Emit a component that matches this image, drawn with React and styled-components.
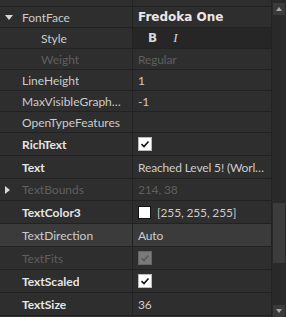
import styled, { createGlobalStyle } from "styled-components";

const GlobalStyle = createGlobalStyle`
    html, body {
        margin: 0;
        padding: 0;
        background: #2e2e2e;
    }
    body {
        font-family: "Lato", "Open Sans", sans-serif;
    }
`;

const rows = [
    { name: "FontFace", value: "Fredoka One", arrow: "down", kind: "font", h: 20 },
    { name: "Style", kind: "style", indent: true, h: 20 },
    { name: "Weight", value: "Regular", indent: true, disabled: true, h: 20 },
    { name: "LineHeight", value: "1", h: 20 },
    { name: "MaxVisibleGraphemes", value: "-1", h: 20 },
    { name: "OpenTypeFeatures", value: "", h: 20 },
    { name: "RichText", kind: "check", bold: true, h: 22 },
    { name: "Text", value: "Reached Level 5! (World 1 Complete)", bold: true, h: 22 },
    { name: "TextBounds", value: "214, 38", arrow: "right", disabled: true, h: 21 },
    { name: "TextColor3", kind: "color", value: "[255, 255, 255]", bold: true, h: 22 },
    { name: "TextDirection", value: "Auto", hover: true, h: 22 },
    { name: "TextFits", kind: "check", disabled: true, h: 22 },
    { name: "TextScaled", kind: "check", bold: true, h: 22 },
    { name: "TextSize", value: "36", bold: true, h: 22 },
];

function Check({ disabled }) {
    return (
        <CheckBox $disabled={disabled}>
            <svg width="10" height="10" viewBox="0 0 10 10">
                <path
                    d="M1.5 5.2 L4 7.5 L8.5 2.5"
                    fill="none"
                    stroke={disabled ? "#5a5a5a" : "#111"}
                    strokeWidth="1.6"
                />
            </svg>
        </CheckBox>
    );
}

function Value({ row }) {
    if (row.kind === "check") return <Check disabled={row.disabled} />;
    if (row.kind === "style")
        return (
            <StyleButtons>
                <span className="b">B</span>
                <span className="i">I</span>
            </StyleButtons>
        );
    if (row.kind === "color")
        return (
            <>
                <Swatch />
                <ValueText>{row.value}</ValueText>
            </>
        );
    return (
        <ValueText $disabled={row.disabled} $font={row.kind === "font"}>
            {row.value}
        </ValueText>
    );
}

export default function App() {
    return (
        <>
            <GlobalStyle />
            <Panel>
                <List>
                    <Row $h={6}>
                        <NameCell />
                        <ValueCell />
                    </Row>
                    {rows.map((row) => (
                        <Row key={row.name} $h={row.h} $hover={row.hover}>
                            <NameCell>
                                {row.arrow && <Arrow $dir={row.arrow} />}
                                <Label
                                    $indent={row.indent}
                                    $bold={row.bold}
                                    $disabled={row.disabled}
                                >
                                    {row.name}
                                </Label>
                            </NameCell>
                            <ValueCell $dark={row.kind === "style"}>
                                <Value row={row} />
                            </ValueCell>
                        </Row>
                    ))}
                </List>
                <ScrollBar>
                    <ScrollButton $up />
                    <Track>
                        <Thumb />
                    </Track>
                    <ScrollButton />
                </ScrollBar>
            </Panel>
        </>
    );
}

const Panel = styled.div`
    width: 286px;
    height: 317px;
    display: flex;
    overflow: hidden;
    background: #2e2e2e;
`;

const List = styled.div`
    width: 271px;
    display: flex;
    flex-direction: column;
    border-right: 1px solid #222;
`;

const Row = styled.div`
    display: grid;
    grid-template-columns: 133px 1fr;
    height: ${(p) => p.$h}px;
    flex-shrink: 0;
    border-bottom: 1px solid #222;
    background: ${(p) => (p.$hover ? "#3b3b3b" : "#2e2e2e")};
`;

const NameCell = styled.div`
    position: relative;
    display: flex;
    align-items: center;
    border-right: 1px solid #222;
    min-width: 0;
    overflow: hidden;
`;

const Label = styled.span`
    padding-left: ${(p) => (p.$indent ? 41 : 22)}px;
    font-size: 12px;
    font-weight: ${(p) => (p.$bold ? 700 : 400)};
    color: ${(p) => (p.$disabled ? "#5f5f5f" : p.$bold ? "#e6e6e6" : "#cccccc")};
    white-space: nowrap;
    overflow: hidden;
    text-overflow: ellipsis;
    max-width: 104px;
`;

const Arrow = styled.span`
    position: absolute;
    left: 5px;
    width: 0;
    height: 0;
    ${(p) =>
        p.$dir === "down"
            ? `border-left: 4px solid transparent;
               border-right: 4px solid transparent;
               border-top: 5px solid #d8d8d8;`
            : `border-top: 4px solid transparent;
               border-bottom: 4px solid transparent;
               border-left: 5px solid #d8d8d8;`}
`;

const ValueCell = styled.div`
    display: flex;
    align-items: center;
    gap: 6px;
    padding-left: 5px;
    min-width: 0;
    overflow: hidden;
    background: ${(p) => (p.$dark ? "#262626" : "transparent")};
`;

const ValueText = styled.span`
    font-size: 12px;
    font-family: ${(p) => (p.$font ? '"DejaVu Sans", sans-serif' : "inherit")};
    font-weight: ${(p) => (p.$font ? 700 : 400)};
    letter-spacing: ${(p) => (p.$font ? "0" : "-0.15px")};
    color: ${(p) => (p.$disabled ? "#5f5f5f" : p.$font ? "#e8e8e8" : "#cccccc")};
    white-space: nowrap;
    overflow: hidden;
    text-overflow: ellipsis;
    padding-right: 6px;
`;

const CheckBox = styled.span`
    width: 14px;
    height: 14px;
    box-sizing: border-box;
    display: flex;
    align-items: center;
    justify-content: center;
    background: ${(p) => (p.$disabled ? "#7a7a7a" : "#ffffff")};
    border: 1px solid ${(p) => (p.$disabled ? "#666" : "#bbb")};
`;

const Swatch = styled.span`
    width: 13px;
    height: 13px;
    flex-shrink: 0;
    box-sizing: border-box;
    background: #fff;
    border: 1px solid #111;
`;

const StyleButtons = styled.div`
    display: flex;
    align-items: center;
    gap: 16px;
    padding-left: 10px;
    font-size: 12px;
    color: #d8d8d8;
    .b {
        font-weight: 700;
        font-family: "DejaVu Sans", sans-serif;
    }
    .i {
        font-style: italic;
        font-family: "Liberation Serif", serif;
        font-size: 13px;
    }
`;

const ScrollBar = styled.div`
    width: 14px;
    display: flex;
    flex-direction: column;
    background: #292929;
    padding: 3px 0 0 1px;
    box-sizing: border-box;
`;

const ScrollButton = styled.div`
    height: 12px;
    width: 12px;
    flex-shrink: 0;
    background: #3a3a3a;
    position: relative;
    &::after {
        content: "";
        position: absolute;
        left: 3px;
        top: 4px;
        border-left: 3px solid transparent;
        border-right: 3px solid transparent;
        ${(p) =>
            p.$up
                ? "border-bottom: 4px solid #a8a8a8;"
                : "border-top: 4px solid #a8a8a8;"}
    }
`;

const Track = styled.div`
    flex: 1;
    padding-top: 188px;
`;

const Thumb = styled.div`
    width: 12px;
    height: 60px;
    background: #3c3c3c;
`;
